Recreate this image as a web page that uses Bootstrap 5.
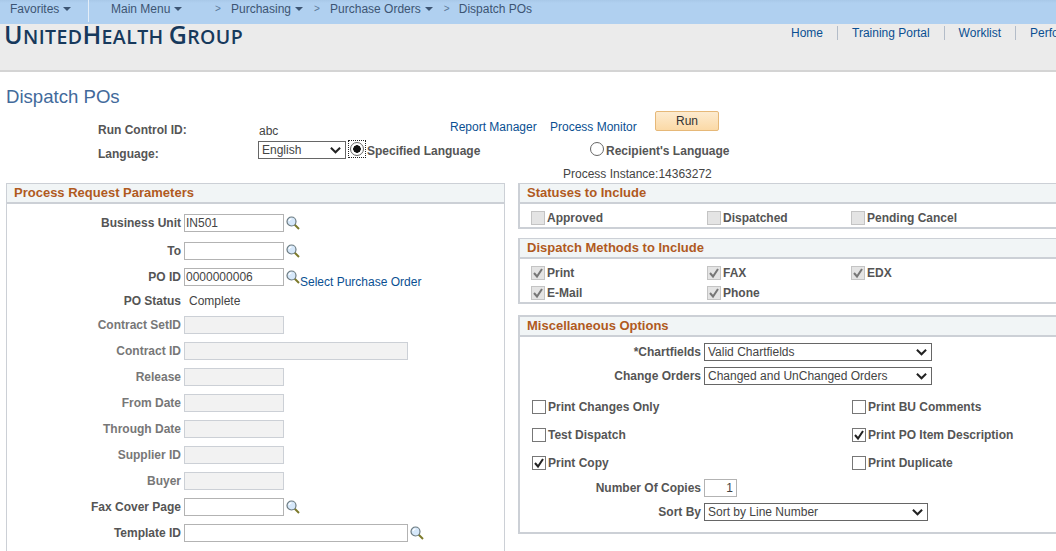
<!DOCTYPE html>
<html lang="en">
<head>
<meta charset="utf-8">
<title>Dispatch POs</title>
<link href="https://cdn.jsdelivr.net/npm/bootstrap@5.3.0/dist/css/bootstrap.min.css" rel="stylesheet">
<style>
html,body{height:551px;overflow:hidden;background:#fff}
body{font-family:"Liberation Sans",Arial,sans-serif;font-size:12px;color:#444;line-height:14px}
a{color:#0a4f92;text-decoration:none}
.crumbbar{height:24px;background:linear-gradient(#a8c8e8 0,#b0d0f0 3px);color:#3d5573}
.crumbbar>*{margin-top:2px}
.fav{width:89px;height:22px;padding-left:10px;border-right:1px solid #e4eef8;margin-top:0;padding-top:2px}
.mainmenu{margin-left:22px;width:104px}
.caret-dn{display:inline-block;width:0;height:0;border:4px solid transparent;border-top-color:#3d5573;border-bottom:0;margin-left:4px;vertical-align:2px}
.sep{color:#5a7898;font-size:10px;width:16px;text-align:left}
.sep-mid{margin-left:11px;width:16px}
.sep-last{margin-left:11px;width:15px}
.crumbitem{white-space:nowrap}
.topband{height:48px;background:#ebebeb;border-bottom:2px solid #d4d4d4;position:relative}
.logotype{font-family:"Open Sans","Noto Sans",sans-serif;font-weight:600;font-size:19.5px;line-height:20px;color:#17395c;padding-left:4px;letter-spacing:.4px;white-space:nowrap}
.logotype b{font-size:25px;font-weight:600;line-height:20px}
.logotype i{font-style:normal;margin-left:5px}
.toplinks{position:absolute;left:791px;right:0;top:2px;white-space:nowrap;overflow:hidden}
.toplinks a{display:inline-block;height:14px}
.toplinks .tsep{display:inline-block;width:1px;height:14px;background:#b3bcc8;margin:0 14px 0 14px;vertical-align:top}
.pagetitle{height:39px;padding:14px 0 0 6px;font-size:18.6px;line-height:22px;color:#426a9b}
.lbl{font-weight:700;color:#555}
.headrow1{height:30px;padding-left:98px}
.rc-label{width:161px;margin-top:12px}
.rc-val{width:191px;margin-top:13px}
.rc-link1{width:100px;margin-top:9px}
.rc-link2{width:105px;margin-top:9px}
.runbtn{width:64px;height:20px;padding:0;border:1px solid #e6b878;border-radius:2px;background:linear-gradient(#fdebcf,#fbd9a6);color:#333;font-size:12px;line-height:16px}
.headrow2{height:24px;padding-left:98px}
.lang-label{width:160px;margin-top:6px}
.lang-select{width:88px;height:18px}
.headrow3{height:18px;padding:2px 0 0 563px}
select.pselect{height:18px;padding:0 0 0 3px;font-size:12px;line-height:16px;color:#444;border:1px solid #666;border-radius:0;background-image:url("data:image/svg+xml,%3Csvg xmlns='http://www.w3.org/2000/svg' viewBox='0 0 12 8'%3E%3Cpath d='M1 1.5l5 5 5-5' fill='none' stroke='%23222' stroke-width='2.2'/%3E%3C/svg%3E");background-position:right 4px center;background-size:11px 8px;box-shadow:none}
.radio-native{appearance:none;width:14px;height:14px;border:1px solid #666;border-radius:50%;background:#fff;margin:0;flex:none}
.radio-native:checked{background:radial-gradient(circle,#111 0 3.5px,#fff 4px)}
.radio-focus{outline:1px dotted #222;padding:1px;margin-left:3px;height:16px;width:16px;display:flex}
.spec-label{margin-left:2px;width:223px;margin-top:3px}
.rec-radio{margin-left:0;margin-top:1px}
.rec-label{margin-left:2px;margin-top:3px}
.panels{gap:13px;padding-left:6px}
.leftpanel{width:499px;flex:none;border:1px solid #ccd0d6;border-bottom:0;height:368px}
.rightcol{width:538px;flex:none}
.panel-head{height:20px;background:#f1f5f6;border-bottom:2px solid #ccd0d6;color:#b05a1e;font-weight:700;font-size:13px;line-height:17px;padding-left:7px}
.rightbox{border:1px solid #ccd0d6;border-width:1px 0 2px 2px}
.box-status{height:46px;margin-bottom:9px}
.box-method{height:66px;margin-bottom:11px}
.box-misc{height:219px;border-top-width:2px}
.fields{padding-top:10px}
.fld{height:18px;margin-bottom:8px}
.fld-to{margin-top:10px}
.fld-status{height:14px}
.fld-label{width:174px;text-align:right;margin-right:3px;flex:none}
.muted-lbl{color:#777}
.txt{width:100px;height:18px;border:1px solid #b3b3b3;padding:0 1px;font-size:12px;color:#444;font-family:inherit;background:#fff;border-radius:0;outline:0}
.txt-wide{width:224px}
.txt:disabled{background:#f2f2f2;border-color:#ccd0d6}
.lens{width:14px;height:14px;margin-left:2px;flex:none}
.polink{margin-top:10px}
.statusval{margin-left:5px}
.cks{padding:4px 0 0 11px}
.ckrow{height:20px}
.ckcol1{width:176px}
.ckcol2{width:144px}
.ck{appearance:none;width:14px;height:14px;border:1px solid #777;background:#fff center/12px 12px no-repeat;margin:0 2px 0 0;flex:none}
.ck:disabled{border-color:#c4c4c4;background-color:#e4e4e4}
.ck:checked{background-image:url("data:image/svg+xml,%3Csvg xmlns='http://www.w3.org/2000/svg' viewBox='0 0 12 12'%3E%3Cpath d='M2 6l3 3.5L10 2' fill='none' stroke='%23222' stroke-width='2'/%3E%3C/svg%3E")}
.ck:checked:disabled{background-image:url("data:image/svg+xml,%3Csvg xmlns='http://www.w3.org/2000/svg' viewBox='0 0 12 12'%3E%3Cpath d='M2 6l3 3.5L10 2' fill='none' stroke='%23777' stroke-width='2'/%3E%3C/svg%3E")}
.misc-body{padding-top:6px}
.misc-row{height:18px;margin-bottom:6px}
.misc-label{width:181px;text-align:right;margin-right:3px;flex:none}
.sel-228{width:228px}
.sel-224{width:224px}
.misc-checks{padding:9px 0 0 12px}
.mckrow{height:28px;align-items:flex-start}
.mckrow:last-child{height:21px}
.mckcol{width:320px}
.num{width:33px;text-align:right;padding-right:3px}
.copies{margin-top:2px}
</style>
</head>
<body>
<svg width="0" height="0" class="d-block">
<symbol id="lens" viewBox="0 0 14 14">
<path d="M8.5 8.5L13 13" stroke="#7c7a2a" stroke-width="2"/>
<circle cx="5.5" cy="5.5" r="4.5" fill="#d6e8fa" stroke="#6b7a80" stroke-width="1.2"/>
<path d="M3 5a3 3 0 0 1 2.5-2.2" fill="none" stroke="#fff" stroke-width="1.2"/>
</symbol>
</svg>
<div class="crumbbar d-flex">
  <div class="fav">Favorites<span class="caret-dn"></span></div>
  <div class="crumbitem mainmenu">Main Menu<span class="caret-dn"></span></div>
  <div class="sep">&gt;</div>
  <div class="crumbitem">Purchasing<span class="caret-dn"></span></div>
  <div class="sep sep-mid">&gt;</div>
  <div class="crumbitem">Purchase Orders<span class="caret-dn"></span></div>
  <div class="sep sep-last">&gt;</div>
  <div class="crumbitem">Dispatch POs</div>
</div>
<div class="topband">
  <div class="logotype"><b>U</b>NITED<b>H</b>EALTH<i><b>G</b>ROUP</i></div>
  <div class="toplinks"><a href="#">Home</a><span class="tsep"></span><a href="#">Training Portal</a><span class="tsep"></span><a href="#">Worklist</a><span class="tsep"></span><a href="#">Performance</a></div>
</div>
<div class="pagetitle">Dispatch POs</div>
<div class="headrow1 d-flex align-items-start">
  <div class="rc-label lbl">Run Control ID:</div>
  <div class="rc-val">abc</div>
  <a class="rc-link1" href="#">Report Manager</a>
  <a class="rc-link2" href="#">Process Monitor</a>
  <button type="button" class="btn runbtn">Run</button>
</div>
<div class="headrow2 d-flex align-items-start">
  <div class="lang-label lbl">Language:</div>
  <select class="form-select pselect lang-select"><option>English</option></select>
  <span class="radio-focus"><input type="radio" name="lang" class="radio-native" checked></span>
  <div class="spec-label lbl">Specified Language</div>
  <input type="radio" name="lang" class="radio-native rec-radio">
  <div class="rec-label lbl">Recipient's Language</div>
</div>
<div class="headrow3">Process Instance:14363272</div>
<div class="panels d-flex">
  <div class="leftpanel">
    <div class="panel-head">Process Request Parameters</div>
    <div class="fields">
      <div class="fld d-flex align-items-center"><div class="fld-label lbl">Business Unit</div><input class="txt" value="IN501"><svg class="lens"><use href="#lens"/></svg></div>
      <div class="fld fld-to d-flex align-items-center"><div class="fld-label lbl">To</div><input class="txt"><svg class="lens"><use href="#lens"/></svg></div>
      <div class="fld d-flex align-items-center"><div class="fld-label lbl">PO ID</div><input class="txt" value="0000000006"><svg class="lens"><use href="#lens"/></svg><a class="polink" href="#">Select Purchase Order</a></div>
      <div class="fld fld-status d-flex align-items-center"><div class="fld-label lbl">PO Status</div><div class="statusval">Complete</div></div>
      <div class="fld d-flex align-items-center"><div class="fld-label lbl muted-lbl">Contract SetID</div><input class="txt" disabled></div>
      <div class="fld d-flex align-items-center"><div class="fld-label lbl muted-lbl">Contract ID</div><input class="txt txt-wide" disabled></div>
      <div class="fld d-flex align-items-center"><div class="fld-label lbl muted-lbl">Release</div><input class="txt" disabled></div>
      <div class="fld d-flex align-items-center"><div class="fld-label lbl muted-lbl">From Date</div><input class="txt" disabled></div>
      <div class="fld d-flex align-items-center"><div class="fld-label lbl muted-lbl">Through Date</div><input class="txt" disabled></div>
      <div class="fld d-flex align-items-center"><div class="fld-label lbl muted-lbl">Supplier ID</div><input class="txt" disabled></div>
      <div class="fld d-flex align-items-center"><div class="fld-label lbl muted-lbl">Buyer</div><input class="txt" disabled></div>
      <div class="fld d-flex align-items-center"><div class="fld-label lbl">Fax Cover Page</div><input class="txt"><svg class="lens"><use href="#lens"/></svg></div>
      <div class="fld d-flex align-items-center"><div class="fld-label lbl">Template ID</div><input class="txt txt-wide"><svg class="lens"><use href="#lens"/></svg></div>
    </div>
  </div>
  <div class="rightcol">
    <div class="rightbox box-status">
      <div class="panel-head">Statuses to Include</div>
      <div class="cks">
        <div class="ckrow d-flex align-items-center">
          <div class="ckcol1 d-flex align-items-center"><input type="checkbox" class="ck" disabled><span class="lbl">Approved</span></div>
          <div class="ckcol2 d-flex align-items-center"><input type="checkbox" class="ck" disabled><span class="lbl">Dispatched</span></div>
          <div class="d-flex align-items-center"><input type="checkbox" class="ck" disabled><span class="lbl">Pending Cancel</span></div>
        </div>
      </div>
    </div>
    <div class="rightbox box-method">
      <div class="panel-head">Dispatch Methods to Include</div>
      <div class="cks">
        <div class="ckrow d-flex align-items-center">
          <div class="ckcol1 d-flex align-items-center"><input type="checkbox" class="ck" disabled checked><span class="lbl">Print</span></div>
          <div class="ckcol2 d-flex align-items-center"><input type="checkbox" class="ck" disabled checked><span class="lbl">FAX</span></div>
          <div class="d-flex align-items-center"><input type="checkbox" class="ck" disabled checked><span class="lbl">EDX</span></div>
        </div>
        <div class="ckrow d-flex align-items-center">
          <div class="ckcol1 d-flex align-items-center"><input type="checkbox" class="ck" disabled checked><span class="lbl">E-Mail</span></div>
          <div class="ckcol2 d-flex align-items-center"><input type="checkbox" class="ck" disabled checked><span class="lbl">Phone</span></div>
        </div>
      </div>
    </div>
    <div class="rightbox box-misc">
      <div class="panel-head">Miscellaneous Options</div>
      <div class="misc-body">
        <div class="misc-row d-flex align-items-center"><div class="misc-label lbl">*Chartfields</div><select class="form-select pselect sel-228"><option>Valid Chartfields</option></select></div>
        <div class="misc-row d-flex align-items-center"><div class="misc-label lbl">Change Orders</div><select class="form-select pselect sel-228"><option>Changed and UnChanged Orders</option></select></div>
        <div class="misc-checks">
          <div class="mckrow d-flex">
            <div class="mckcol d-flex align-items-center"><input type="checkbox" class="ck"><span class="lbl">Print Changes Only</span></div>
            <div class="d-flex align-items-center"><input type="checkbox" class="ck"><span class="lbl">Print BU Comments</span></div>
          </div>
          <div class="mckrow d-flex">
            <div class="mckcol d-flex align-items-center"><input type="checkbox" class="ck"><span class="lbl">Test Dispatch</span></div>
            <div class="d-flex align-items-center"><input type="checkbox" class="ck" checked><span class="lbl">Print PO Item Description</span></div>
          </div>
          <div class="mckrow d-flex">
            <div class="mckcol d-flex align-items-center"><input type="checkbox" class="ck" checked><span class="lbl">Print Copy</span></div>
            <div class="d-flex align-items-center"><input type="checkbox" class="ck"><span class="lbl">Print Duplicate</span></div>
          </div>
        </div>
        <div class="misc-row copies d-flex align-items-center"><div class="misc-label lbl">Number Of Copies</div><input class="txt num" value="1"></div>
        <div class="misc-row d-flex align-items-center"><div class="misc-label lbl">Sort By</div><select class="form-select pselect sel-224"><option>Sort by Line Number</option></select></div>
      </div>
    </div>
  </div>
</div>
<script src="https://cdn.jsdelivr.net/npm/bootstrap@5.3.0/dist/js/bootstrap.bundle.min.js"></script>
</body>
</html>
